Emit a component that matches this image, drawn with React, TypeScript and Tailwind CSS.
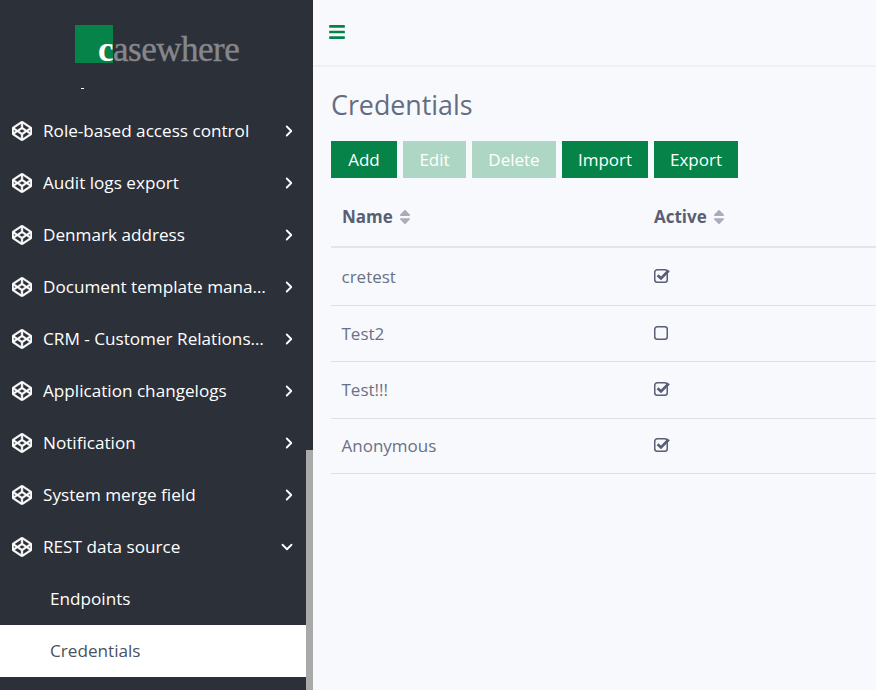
import React from 'react';
import { ChevronDown, ChevronRight } from 'lucide-react';
import { FaBars, FaCodepen, FaSort } from 'react-icons/fa';

const menu = [
    'Role-based access control',
    'Audit logs export',
    'Denmark address',
    'Document template management',
    'CRM - Customer Relationship',
    'Application changelogs',
    'Notification',
    'System merge field',
];

const rows = [
    { name: 'cretest', active: true, height: 'h-[58px]' },
    { name: 'Test2', active: false, height: 'h-[56px]' },
    { name: 'Test!!!', active: true, height: 'h-[57px]' },
    { name: 'Anonymous', active: true, height: 'h-[55px]' },
];

const CheckIcon: React.FC<{ checked: boolean }> = ({ checked }) => (
    <svg width="18" height="16" viewBox="0 0 18 16" fill="none" className="mb-[2px] text-[#585f75]">
        <rect x="0.75" y="1.75" width="12.5" height="12.5" rx="2.5" stroke="currentColor" strokeWidth="1.5" />
        {checked && <path d="M3.6 7.2 L7 10.4 L14.8 2.6" stroke="currentColor" strokeWidth="2.8" />}
    </svg>
);

const MenuRow: React.FC<{ label: string; open?: boolean }> = ({ label, open }) => (
    <div className="h-[52px] flex items-center pl-[12px] text-white text-[17.15px]">
        <FaCodepen size={20} stroke="currentColor" strokeWidth={12} className="shrink-0 mr-[11px]" />
        <span className="flex-1 truncate">{label}</span>
        {open
            ? <ChevronDown size={18} strokeWidth={2.4} className="shrink-0 ml-[11px] mr-[10px]" />
            : <ChevronRight size={18} strokeWidth={2.4} className="shrink-0 ml-[13px] mr-[8px]" />}
    </div>
);

const ActionButton: React.FC<{ label: string; disabled?: boolean; width: string }> = ({ label, disabled, width }) => (
    <button className={`h-[37px] ${width} text-[17px] text-white ${disabled ? 'bg-[#aed6c4]' : 'bg-[#058348]'}`}>
        {label}
    </button>
);

export default function App() {
    return (
        <div className="w-[876px] h-[690px] flex overflow-hidden bg-[#f8f9fd] font-['Open_Sans','Noto_Sans',sans-serif]">

            {/* Sidebar */}
            <aside className="relative w-[313px] h-full shrink-0 bg-[#2c3039] overflow-hidden">
                <div className="h-[88px] pt-[25px] pl-[75px]">
                    <div className="relative h-[38px] w-[38px] bg-[#058348]">
                        <span className="absolute left-[23px] top-[6px] text-[35px] leading-[38px] font-['Liberation_Serif',serif] font-bold text-white">c</span>
                        <span className="absolute left-[38px] top-[6px] text-[35px] leading-[38px] font-['Liberation_Serif',serif] tracking-[-0.5px] [-webkit-text-stroke:0.4px_#85878c] text-[#85878c] whitespace-nowrap">
                            asewhere
                        </span>
                    </div>
                </div>
                <div className="h-[17px] pl-[81px]">
                    <div className="h-px w-[3px] bg-white"></div>
                </div>
                <div className="w-[306px]">
                    {menu.map((item) => (
                        <MenuRow key={item} label={item} />
                    ))}
                    <MenuRow label="REST data source" open />
                    <div className="h-[52px] flex items-center pl-[50px] text-white text-[17.15px]">Endpoints</div>
                    <div className="h-[52px] flex items-center pl-[50px] bg-white text-[#4a5160] text-[17.15px]">Credentials</div>
                </div>
                {/* scrollbar thumb */}
                <div className="absolute right-0 top-[450px] bottom-0 w-[7px] bg-[#a9a9a9]"></div>
            </aside>

            {/* Main */}
            <main className="flex-1 min-w-0">
                <div className="h-[67px] flex items-center pl-[15px] pb-[1px] border-b-2 border-[#eff0f4] text-[#058348]">
                    <FaBars size={18} />
                </div>
                <div className="pl-[18px]">
                    <h1 className="mt-[20px] h-[36px] leading-[36px] text-[26.8px] text-[#646c80]">Credentials</h1>
                    <div className="mt-[18px] flex gap-[6px]">
                        <ActionButton label="Add" width="w-[66px]" />
                        <ActionButton label="Edit" disabled width="w-[63px]" />
                        <ActionButton label="Delete" disabled width="w-[84px]" />
                        <ActionButton label="Import" width="w-[86px]" />
                        <ActionButton label="Export" width="w-[84px]" />
                    </div>

                    <div className="mt-[9px] h-[61px] flex items-center border-b-2 border-[#e4e5e9] text-[#585f75] text-[17px] font-bold">
                        <div className="w-[323px] pl-[11px] flex items-center gap-[3px]">
                            Name <FaSort size={18} className="text-[#a9adba]" />
                        </div>
                        <div className="flex items-center gap-[3px]">
                            Active <FaSort size={18} className="text-[#a9adba]" />
                        </div>
                    </div>
                    {rows.map((row) => (
                        <div key={row.name} className={`${row.height} flex items-center border-b border-[#e0e1e5] text-[#6a7185] text-[17px]`}>
                            <div className="w-[323px] pl-[10.5px]">{row.name}</div>
                            <CheckIcon checked={row.active} />
                        </div>
                    ))}
                </div>
            </main>
        </div>
    );
}
